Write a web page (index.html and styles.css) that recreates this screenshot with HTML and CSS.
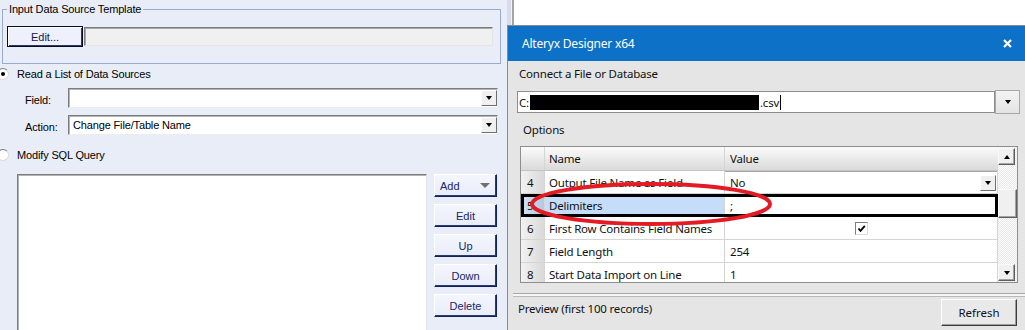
FILE: index.html
```html
<!DOCTYPE html>
<html lang="en">
<head>
    <meta charset="UTF-8">
    <title>Dynamic Input - Alteryx Designer x64</title>
    <link rel="stylesheet" href="styles.css">
</head>
<body>
<div class="screen">
    <!-- Dynamic Input tool configuration -->
    <div class="config-pane">
        <fieldset class="group">
            <legend>Input Data Source Template</legend>
            <div class="template-row">
                <button class="btn-default">Edit...</button>
                <div class="path-box"></div>
            </div>
        </fieldset>

        <div class="radio-line"><span class="radio checked"></span>Read a List of Data Sources</div>
        <div class="field-row">
            <span class="field-label">Field:</span>
            <div class="combo"><span class="combo-text"></span><span class="combo-btn"><i class="tri"></i></span></div>
        </div>
        <div class="field-row">
            <span class="field-label">Action:</span>
            <div class="combo"><span class="combo-text">Change File/Table Name</span><span class="combo-btn"><i class="tri"></i></span></div>
        </div>

        <div class="radio-line sql"><span class="radio"></span>Modify SQL Query</div>
        <div class="sql-area">
            <div class="listbox"></div>
            <div class="side-buttons">
                <button class="win-btn add">Add<i class="add-arrow"></i></button>
                <button class="win-btn">Edit</button>
                <button class="win-btn">Up</button>
                <button class="win-btn">Down</button>
                <button class="win-btn">Delete</button>
            </div>
        </div>
    </div>

    <div class="right-col">
        <div class="canvas-strip"></div>
        <div class="dialog">
            <div class="titlebar">
                <span>Alteryx Designer x64</span>
                <svg class="close" width="9" height="9" viewBox="0 0 9 9"><path d="M1 1L8 8M8 1L1 8" stroke="#fff" stroke-width="2.2"/></svg>
            </div>

            <div class="caption">Connect a File or Database</div>
            <div class="file-row">
                <div class="file-input">C:<span class="redact"></span>.csv<span class="caret"></span></div>
                <div class="file-drop"><i class="tri"></i></div>
            </div>

            <div class="caption options">Options</div>
            <div class="grid">
                <div class="grid-main">
                    <div class="grid-head">
                        <div class="rh"></div>
                        <div class="c-name">Name</div>
                        <div class="c-value">Value</div>
                    </div>
                    <div class="grid-row">
                        <div class="rh">4</div>
                        <div class="c-name">Output File Name as Field</div>
                        <div class="c-value"><div class="val-combo">No<span class="combo-btn"><i class="tri"></i></span></div></div>
                    </div>
                    <div class="grid-row selected">
                        <div class="rh">5</div>
                        <div class="c-name">Delimiters</div>
                        <div class="c-value">;</div>
                    </div>
                    <div class="grid-row">
                        <div class="rh">6</div>
                        <div class="c-name">First Row Contains Field Names</div>
                        <div class="c-value centered">
                            <span class="checkbox"><svg width="11" height="11" viewBox="0 0 11 11"><path d="M2.5 5.5L4.5 7.8L8.8 2.8" fill="none" stroke="#000" stroke-width="1.8"/></svg></span>
                        </div>
                    </div>
                    <div class="grid-row">
                        <div class="rh">7</div>
                        <div class="c-name">Field Length</div>
                        <div class="c-value">254</div>
                    </div>
                    <div class="grid-row">
                        <div class="rh">8</div>
                        <div class="c-name">Start Data Import on Line</div>
                        <div class="c-value">1</div>
                    </div>
                </div>
                <div class="vscroll">
                    <div class="sb-btn up"><i class="tri up"></i></div>
                    <div class="sb-thumb"></div>
                    <div class="sb-btn down"><i class="tri"></i></div>
                </div>
                <!-- red marker drawn over the Delimiters row -->
                <svg class="marker" width="300" height="90" viewBox="0 0 300 90">
                    <ellipse cx="130" cy="57" rx="119" ry="20" fill="none" stroke="#e41b23" stroke-width="4"/>
                </svg>
            </div>

            <div class="separator"></div>
            <div class="preview-row">
                <span>Preview (first 100 records)</span>
                <button class="refresh">Refresh</button>
            </div>
        </div>
    </div>
</div>
</body>
</html>
```

FILE: styles.css
```css
* {
    box-sizing: border-box;
}
body {
    margin: 0;
    width: 1025px;
    height: 330px;
    overflow: hidden;
    background: #fff;
    font-family: "Liberation Sans", Arial, sans-serif;
}
.screen {
    display: flex;
    height: 330px;
}

/* ---------- left: configuration pane ---------- */
.config-pane {
    width: 507px;
    flex: none;
    background: #e9edf7;
    font-size: 11px;
    letter-spacing: -0.15px;
    color: #000;
}
.group {
    margin: 2px 0 0 2px;
    width: 499px;
    border: 1px solid #98acd2;
    padding: 10px 7px 16px 4px;
}
.group legend {
    padding: 0 2px;
    line-height: 14px;
}
.template-row {
    display: flex;
    align-items: center;
    gap: 1px;
    height: 21px;
}
.btn-default {
    width: 76px;
    height: 21px;
    padding: 0;
    font: inherit;
    color: #10204f;
    background: #eef1fb;
    border: 1px solid #0b0b1e;
    box-shadow: inset 1px 1px 0 #fff, inset -1px -1px 0 #2a3a6c;
}
.path-box {
    flex: 1;
    height: 19px;
    background: #f0f0f0;
    border: 1px solid;
    border-color: #7c7c7c #e4e4e4 #e4e4e4 #7c7c7c;
    box-shadow: inset 1px 1px 0 #a9a9a9;
}
.radio-line {
    display: flex;
    align-items: center;
    height: 14px;
    margin-top: 3px;
}
.radio-line.sql {
    margin-top: 13px;
}
.radio {
    width: 12px;
    height: 12px;
    margin: 0 8px 0 -3px;
    border-radius: 50%;
    background: #fff;
    border: 1px solid;
    border-color: #7d7d7d #dcdcdc #dcdcdc #7d7d7d;
    display: flex;
    align-items: center;
    justify-content: center;
}
.radio.checked::after {
    content: "";
    width: 4px;
    height: 4px;
    border-radius: 50%;
    background: #000;
}
.field-row {
    display: flex;
    align-items: center;
    height: 20px;
    margin-top: 7px;
    padding-left: 25px;
}
.field-label {
    width: 43px;
    padding-top: 4px;
}
.combo {
    width: 430px;
    height: 20px;
    display: flex;
    align-items: center;
    padding-left: 4px;
    background: #fff;
    border: 1px solid;
    border-color: #7c7c7c #ececec #ececec #7c7c7c;
    box-shadow: inset 1px 1px 0 #b4b4b4;
}
.combo-btn {
    width: 16px;
    height: 16px;
    margin-left: auto;
    display: flex;
    align-items: center;
    justify-content: center;
    background: #f0f0f0;
    border: 1px solid;
    border-color: #fff #6f6f6f #6f6f6f #fff;
}
.tri {
    width: 0;
    height: 0;
    border-left: 3.5px solid transparent;
    border-right: 3.5px solid transparent;
    border-top: 4px solid #000;
}
.tri.up {
    border-top: 0;
    border-bottom: 4px solid #000;
}
.sql-area {
    display: flex;
    gap: 7px;
    margin-top: 12px;
    padding-left: 17px;
}
.listbox {
    width: 410px;
    height: 170px;
    background: #fff;
    border: 1px solid;
    border-color: #7c7c7c #e4e4e4 #e4e4e4 #7c7c7c;
    box-shadow: inset 1px 1px 0 #b4b4b4;
}
.side-buttons {
    display: flex;
    flex-direction: column;
    gap: 7px;
    width: 63px;
}
.win-btn {
    height: 23px;
    padding: 0;
    font: inherit;
    color: #16266a;
    background: linear-gradient(#f4f6fd, #e9edf9);
    border: 1px solid;
    border-color: #fff #13235a #13235a #fff;
    box-shadow: inset -1px -1px 0 #2b3b72;
}
.win-btn.add {
    display: flex;
    align-items: center;
    padding: 0 6px 0 5px;
}
.add-arrow {
    margin-left: auto;
    width: 0;
    height: 0;
    border-left: 5px solid transparent;
    border-right: 5px solid transparent;
    border-top: 5px solid #6e6e6e;
}

/* ---------- right: connect dialog ---------- */
.right-col {
    flex: 1;
    display: flex;
    flex-direction: column;
}
.canvas-strip {
    height: 25px;
    background: linear-gradient(to right, #d6dcea 0 4px, #f2f2f2 4px 5px, #a5a5a5 5px 7px, #fff 7px);
}
.dialog {
    flex: 1;
    background: #e5e5e5;
    border-top: 1px solid #8a8a8a;
    border-left: 1px solid #8a8a8a;
    font-family: "Noto Sans", "Open Sans", sans-serif;
    font-size: 11.5px;
    letter-spacing: -0.2px;
    color: #111;
}
.titlebar {
    height: 35px;
    display: flex;
    align-items: center;
    justify-content: space-between;
    padding: 0 13px 0 14px;
    background: #0e71c8;
    color: #fff;
    font-size: 12px;
}
.caption {
    margin-top: 6px;
    padding-left: 11px;
    line-height: 14px;
}
.caption.options {
    margin-top: 9px;
    padding-left: 15px;
}
.file-row {
    display: flex;
    align-items: center;
    margin: 9px 5px 0 9px;
    height: 24px;
}
.file-input {
    flex: 1;
    height: 22px;
    display: flex;
    align-items: center;
    padding-left: 1px;
    background: #fff;
    border: 1px solid #8d8d8d;
}
.redact {
    width: 229px;
    height: 15px;
    margin: 0 1px 0 1px;
    background: #000;
}
.caret {
    width: 1px;
    height: 15px;
    margin-left: 1px;
    background: #000;
}
.file-drop {
    width: 25px;
    height: 24px;
    display: flex;
    align-items: center;
    justify-content: center;
    background: linear-gradient(#f3f3f3, #e4e4e4);
    border: 1px solid #a8a8a8;
}

/* options property grid */
.grid {
    position: relative;
    display: flex;
    height: 137px;
    margin: 9px 7px 0 12px;
    border: 1px solid #8e8e8e;
    background: #fff;
    overflow: hidden;
}
.grid-main {
    width: 477px;
}
.grid-head,
.grid-row {
    display: flex;
}
.grid-head {
    height: 24px;
    background: linear-gradient(#fbfbfb, #dadada);
    border-bottom: 1px solid #c4c4c4;
}
.grid-row {
    height: 23px;
}
.grid-head > div,
.grid-row > div {
    display: flex;
    align-items: center;
    border-right: 1px solid #d5d5d5;
}
.grid-row > div {
    border-bottom: 1px solid #d5d5d5;
}
.rh {
    width: 24px;
    padding-left: 6px;
}
.grid-row .rh {
    background: linear-gradient(to right, #f2f2f2, #d9d9d9);
}
.c-name {
    width: 180px;
    padding-left: 4px;
    white-space: nowrap;
    overflow: hidden;
}
.c-value {
    width: 273px;
    padding-left: 5px;
}
.grid-head .c-value {
    border-right: 0;
}
.c-value.centered {
    justify-content: center;
    padding-left: 0;
}
.grid-row.selected {
    outline: 3px solid #000;
    outline-offset: -3px;
}
.grid-row.selected .rh {
    background: linear-gradient(to right, #d3e2f3, #b4c9e0);
}
.grid-row.selected .c-name {
    background: #c5ddf8;
}
.val-combo {
    flex: 1;
    height: 22px;
    display: flex;
    align-items: center;
    margin-left: -5px;
    padding: 0 1px 0 5px;
    border-top: 1px solid #a9a9a9;
}
.checkbox {
    width: 13px;
    height: 13px;
    display: flex;
    align-items: center;
    justify-content: center;
    background: #fff;
    border: 1px solid;
    border-color: #7e7e7e #dadada #dadada #7e7e7e;
}
.vscroll {
    flex: 1;
    display: flex;
    flex-direction: column;
    background: repeating-conic-gradient(#fdfdfd 0 25%, #e9e9e9 0 50%) 0 0 / 2px 2px;
}
.sb-btn,
.sb-thumb {
    display: flex;
    align-items: center;
    justify-content: center;
    background: #f0f0f0;
    border: 1px solid;
    border-color: #fbfbfb #5e5e5e #5e5e5e #fbfbfb;
    box-shadow: inset -1px -1px 0 #a3a3a3;
}
.sb-btn {
    width: 17px;
    height: 17px;
}
.sb-btn.up {
    margin-top: 1px;
}
.sb-btn.down {
    margin-top: auto;
    margin-bottom: 1px;
}
.sb-thumb {
    height: 29px;
    margin-top: 24px;
}
.marker {
    position: absolute;
    left: 0;
    top: 0;
    pointer-events: none;
}

.separator {
    height: 4px;
    margin: 10px 0 0 5px;
    background: #f6f6f6;
    border-top: 1px solid #a9a9a9;
    border-bottom: 1px solid #b9b9b9;
}
.preview-row {
    display: flex;
    align-items: flex-start;
    justify-content: space-between;
    padding: 0 8px 0 10px;
}
.preview-row span {
    margin-top: 5px;
    line-height: 14px;
}
.refresh {
    width: 76px;
    height: 27px;
    margin-top: 2px;
    padding: 0;
    font: inherit;
    color: #111;
    background: #e9e9e9;
    border: 1px solid;
    border-color: #fff #3c3c3c #3c3c3c #fff;
    box-shadow: inset -1px -1px 0 #9c9c9c;
}
```
